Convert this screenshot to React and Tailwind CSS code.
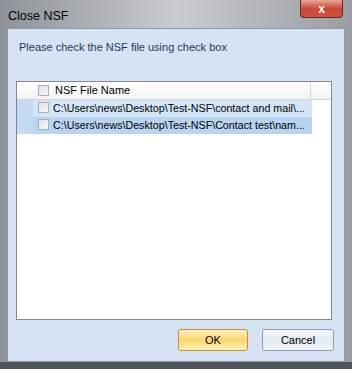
export default function App() {
  const rows = [
    { path: 'C:\\Users\\news\\Desktop\\Test-NSF\\contact and mail\\...', bg: 'bg-[#d3e5f7]' },
    { path: 'C:\\Users\\news\\Desktop\\Test-NSF\\Contact test\\nam...', bg: 'bg-[#b9d4f0]' },
  ];

  const Box = () => (
    <span className="w-[11px] h-[11px] border border-[#a9b2bc] bg-gradient-to-br from-[#dfe3e8] to-[#f7f8f9] shrink-0" />
  );

  return (
    <div
      className="w-[352px] h-[369px] flex flex-col bg-gradient-to-r from-[#8e9399] via-[#c9ccd0] to-[#9a9ea4] overflow-hidden"
      style={{ fontFamily: '"Liberation Sans", Arial, sans-serif' }}
    >
      {/* title bar */}
      <div className="h-[28px] flex items-start justify-between pl-[8px] pr-[9px] shrink-0">
        <span className="mt-[7px] text-[12.5px] text-black">Close NSF</span>
        <div className="w-[43px] h-[18px] rounded-b-[4px] border border-[#6b2a22] border-t-0 bg-gradient-to-b from-[#e8a597] via-[#c9483a] to-[#d0513b] flex items-center justify-center">
          <span className="text-white text-[12px] font-bold leading-none">x</span>
        </div>
      </div>

      {/* client */}
      <div className="flex-1 mx-[7px] border border-[#8a98a8] bg-[#d6e3f2] flex flex-col px-[8px] pt-[10px] pb-[10px]">
        <p className="text-[11px] text-[#1e395b] pl-[3px]">Please check the NSF file using check box</p>

        <div className="mt-[25px] h-[239px] mr-[4px] border border-[#828790] bg-white flex flex-col">
          <div className="h-[18px] flex items-center border-b border-[#d5d5d5] bg-gradient-to-b from-white to-[#f1f2f4]">
            <div className="w-[294px] h-full flex items-center gap-[6px] pl-[21px] border-r border-[#d5d5d5]">
              <Box />
              <span className="text-[11px] text-black">NSF File Name</span>
            </div>
          </div>
          {rows.map((r, i) => (
            <div key={i} className={`h-[17px] w-[295px] flex items-center ${r.bg}`}>
              <div className="w-[16px] h-full bg-[#c4daf2]" />
              <div className="flex items-center gap-[4px] pl-[5px]">
                <Box />
                <span className="text-[10.7px] text-black whitespace-nowrap">{r.path}</span>
              </div>
            </div>
          ))}
        </div>

        <div className="mt-auto flex justify-end gap-[14px] pr-[2px]">
          <button className="w-[70px] h-[22px] rounded-[3px] border border-[#c2902c] bg-gradient-to-b from-[#fff0c2] via-[#fbd66c] to-[#fff1b4] text-[11px] text-black">
            OK
          </button>
          <button className="w-[72px] h-[22px] rounded-[3px] border border-[#8d9cb0] bg-gradient-to-b from-[#f6f8fb] via-[#e3e9f1] to-[#f1f4f8] text-[11px] text-black">
            Cancel
          </button>
        </div>
      </div>
      <div className="h-[7px] shrink-0 bg-[#50555c]" />
    </div>
  );
}
